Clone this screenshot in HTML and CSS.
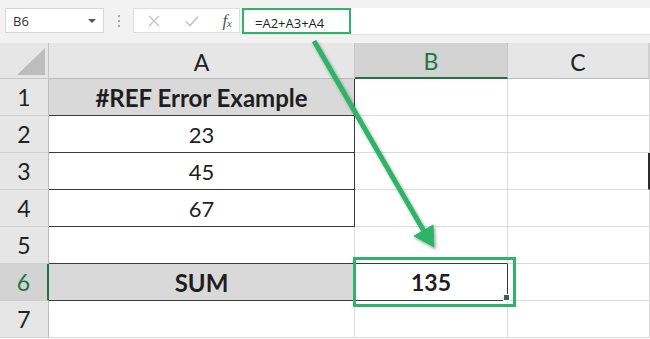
FILE: index.html
```html
<!DOCTYPE html>
<html lang="en">

<head>
    <meta charset="UTF-8">
    <meta name="viewport" content="width=device-width, initial-scale=1.0">
    <title>#REF Error Example</title>
    <link rel="stylesheet" href="styles.css">
</head>

<body>
    <div class="toolbar">
        <div class="name-box">
            <span>B6</span>
            <span class="caret"></span>
        </div>
        <div class="grip"><i></i><i></i><i></i></div>
        <div class="fx-buttons">
            <svg width="14" height="14" viewBox="0 0 14 14">
                <path d="M2 2 L12 12 M12 2 L2 12" stroke="#c4c4c4" stroke-width="1.4" fill="none" />
            </svg>
            <svg width="16" height="14" viewBox="0 0 16 14">
                <path d="M2 7.5 L6 11.5 L14 2.5" stroke="#c4c4c4" stroke-width="1.6" fill="none" />
            </svg>
            <span class="fx">f<sub>x</sub></span>
        </div>
        <div class="formula-bar">
            <span class="formula">=A2+A3+A4</span>
        </div>
    </div>

    <div class="sheet">
        <div class="corner"><span class="select-all"></span></div>
        <div class="col-head">A</div>
        <div class="col-head selected">B</div>
        <div class="col-head last">C</div>

        <div class="row-head">1</div>
        <div class="cell boxed title">#REF Error Example</div>
        <div class="cell"></div>
        <div class="cell"></div>

        <div class="row-head">2</div>
        <div class="cell boxed">23</div>
        <div class="cell"></div>
        <div class="cell"></div>

        <div class="row-head">3</div>
        <div class="cell boxed">45</div>
        <div class="cell"></div>
        <div class="cell edge"></div>

        <div class="row-head">4</div>
        <div class="cell boxed">67</div>
        <div class="cell"></div>
        <div class="cell"></div>

        <div class="row-head">5</div>
        <div class="cell dark-bottom"></div>
        <div class="cell dark-bottom"></div>
        <div class="cell"></div>

        <div class="row-head selected">6</div>
        <div class="cell boxed title">SUM</div>
        <div class="cell boxed bold">135</div>
        <div class="cell"></div>

        <div class="row-head">7</div>
        <div class="cell"></div>
        <div class="cell"></div>
        <div class="cell"></div>

        <div class="selection"><span class="handle"></span></div>
    </div>

    <svg class="arrow" width="650" height="339" viewBox="0 0 650 339">
        <defs>
            <filter id="shadow" x="-20%" y="-20%" width="140%" height="140%">
                <feDropShadow dx="1.5" dy="2" stdDeviation="1.5" flood-color="#000" flood-opacity="0.35" />
            </filter>
        </defs>
        <g filter="url(#shadow)" fill="#2db469" stroke="#2db469">
            <line x1="314" y1="41" x2="425" y2="233" stroke-width="5" />
            <polygon points="434,247 433,225 414,236" stroke-width="1" />
        </g>
    </svg>
</body>

</html>
```

FILE: styles.css
```css
body {
    margin: 0;
    width: 650px;
    height: 339px;
    overflow: hidden;
    position: relative;
    background-color: #ffffff;
    font-family: 'Lato', 'Open Sans', sans-serif;
    color: #1e1e1e;
}

.toolbar {
    height: 43px;
    box-sizing: border-box;
    padding: 8px 0 0 5px;
    display: flex;
    align-items: flex-start;
    background-color: #f2f2f2;
}

.name-box {
    width: 99px;
    height: 25px;
    box-sizing: border-box;
    display: flex;
    align-items: center;
    justify-content: space-between;
    padding: 0 7px 0 7px;
    background-color: white;
    border: 1px solid #d6d6d6;
    font-family: 'Open Sans', sans-serif;
    font-size: 13px;
    color: #333;
}

.caret {
    width: 0;
    height: 0;
    border-left: 4px solid transparent;
    border-right: 4px solid transparent;
    border-top: 4px solid #555;
}

.grip {
    width: 29px;
    height: 25px;
    display: flex;
    flex-direction: column;
    align-items: center;
    justify-content: center;
    gap: 3px;
}

.grip i {
    width: 2px;
    height: 2px;
    background-color: #a8a8a8;
}

.fx-buttons {
    width: 107px;
    height: 25px;
    box-sizing: border-box;
    display: flex;
    align-items: center;
    justify-content: space-between;
    padding: 0 7px 0 13px;
    background-color: white;
    border: 1px solid #dedede;
}

.fx {
    font-family: 'Liberation Serif', serif;
    font-style: italic;
    font-size: 17px;
    color: #555;
}

.fx sub {
    font-size: 11px;
    vertical-align: -1px;
}

.formula-bar {
    flex: 1;
    height: 26px;
    margin-left: 2px;
    background-color: white;
    border-bottom: 1px solid #e2e2e2;
}

.formula {
    display: inline-block;
    width: 109px;
    height: 26px;
    box-sizing: border-box;
    border: 2px solid #2db469;
    padding: 4px 0 0 11px;
    font-family: 'Open Sans', sans-serif;
    font-size: 13px;
    color: #222;
}

.sheet {
    position: relative;
    display: grid;
    grid-template-columns: 49px 306px 153px 142px;
    grid-template-rows: 36px repeat(7, 37px);
    font-size: 22px;
}

.sheet > div {
    box-sizing: border-box;
    display: flex;
    align-items: center;
    justify-content: center;
}

.corner {
    position: relative;
    background-color: #e6e6e6;
    border-right: 1px solid #c6c6c6;
    border-bottom: 1px solid #c6c6c6;
}

.select-all {
    position: absolute;
    right: 3px;
    bottom: 3px;
    width: 0;
    height: 0;
    border-left: 28px solid transparent;
    border-bottom: 27px solid #bdbdbd;
}

.col-head {
    background-color: #e6e6e6;
    border-right: 1px solid #c6c6c6;
    border-bottom: 1px solid #bcbcbc;
    padding-top: 2px;
    font-size: 23px;
    color: #222;
}

.col-head.selected {
    background-color: #d3d3d3;
    border-bottom: 2px solid #217346;
    color: #217346;
}

.col-head.last {
    border-right: 2px solid #d0d0d0;
}

.row-head {
    background-color: #e6e6e6;
    border-right: 1px solid #bcbcbc;
    border-bottom: 1px solid #cfcfcf;
    font-size: 23px;
    color: #222;
}

.row-head.selected {
    background-color: #d3d3d3;
    border-right: 2px solid #217346;
    color: #217346;
}

.cell {
    border-right: 1px solid #dadada;
    border-bottom: 1px solid #dadada;
}

.cell.boxed {
    border-right-color: #3a3a3a;
    border-bottom-color: #3a3a3a;
}

.cell.dark-bottom {
    border-bottom-color: #3a3a3a;
}

.cell.edge {
    border-right: 2px solid #2a2a2a;
}

.title {
    background-color: #d9d9d9;
    font-weight: bold;
    font-size: 24px;
}

.bold {
    font-weight: bold;
    font-size: 23px;
}

.selection {
    position: absolute;
    left: 353px;
    top: 214px;
    width: 163px;
    height: 50px;
    border: 3px solid #2db469;
}

.handle {
    position: absolute;
    right: 3px;
    bottom: 3px;
    width: 5px;
    height: 5px;
    background-color: #217346;
    border: 1px solid white;
}

.arrow {
    position: absolute;
    left: 0;
    top: 0;
    pointer-events: none;
}
```
